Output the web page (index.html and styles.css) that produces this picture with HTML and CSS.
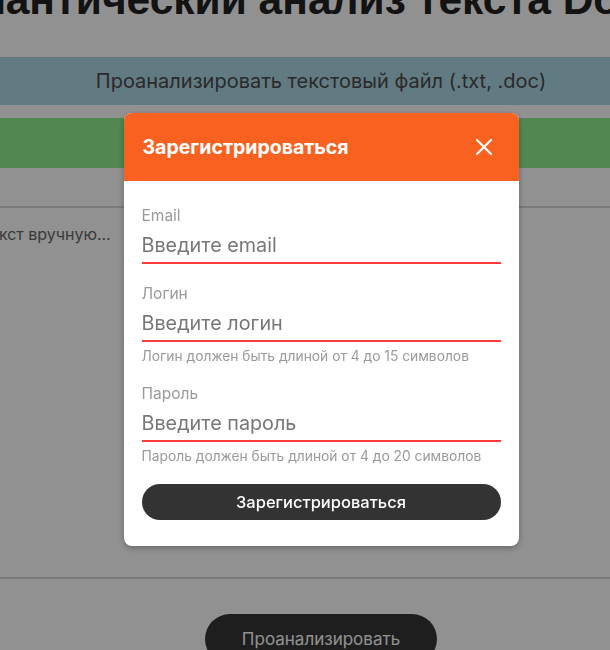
FILE: index.html
```
<!DOCTYPE html>
<html lang="ru">
  <head>
    <meta charset="UTF-8" />
    <meta name="viewport" content="width=device-width, initial-scale=1.0" />
    <title>Семантический анализ текста</title>
    <link rel="stylesheet" href="styles.css">
  </head>
  <body>
    <div class="page">
      <h1 class="page-title">Семантический анализ текста Docx</h1>
      <button class="file-button">Проанализировать текстовый файл (.txt, .doc)</button>
      <button class="manual-button">Ввести текст вручную</button>
      <textarea class="text-input" placeholder="Введите текст вручную..."></textarea>
      <div class="actions">
        <button class="analyze-button">Проанализировать</button>
      </div>
    </div>

    <!-- Register modal -->
    <div class="overlay">
      <div class="modal">
        <div class="modal-header">
          <h2 class="modal-title">Зарегистрироваться</h2>
          <button class="close-button" aria-label="Закрыть">
            <svg width="18" height="18" viewBox="0 0 18 18">
              <path d="M2 2 L16 16 M16 2 L2 16" stroke="#fff" stroke-width="2.2" stroke-linecap="round" />
            </svg>
          </button>
        </div>
        <form class="modal-body">
          <div class="field">
            <label class="field-label">Email</label>
            <input class="field-input" type="text" placeholder="Введите email" />
          </div>
          <div class="field">
            <label class="field-label">Логин</label>
            <input class="field-input" type="text" placeholder="Введите логин" />
            <div class="field-hint">Логин должен быть длиной от 4 до 15 символов</div>
          </div>
          <div class="field">
            <label class="field-label">Пароль</label>
            <input class="field-input" type="text" placeholder="Введите пароль" />
            <div class="field-hint">Пароль должен быть длиной от 4 до 20 символов</div>
          </div>
          <button type="button" class="submit-button">Зарегистрироваться</button>
        </form>
      </div>
    </div>
  </body>
</html>
```
FILE: styles.css
```
* {
  margin: 0;
  padding: 0;
  box-sizing: border-box;
}

html,
body {
  height: 100%;
  width: 100%;
  overflow: hidden;
}

body {
  background-color: #fff;
  font-family: 'Inter', 'Liberation Sans', sans-serif;
}

/* Background page */
.page {
  width: 800px;
  margin-left: -79px;
  display: flex;
  flex-direction: column;
}

.page-title {
  font-family: 'Liberation Sans', Arial, sans-serif;
  font-size: 42.5px;
  line-height: 48px;
  font-weight: bold;
  color: #222;
  text-align: center;
  white-space: nowrap;
  padding-right: 64px;
  margin-top: -24px;
  margin-bottom: 33px;
}

.file-button,
.manual-button {
  border: none;
  width: 100%;
  font-family: 'Inter', sans-serif;
  font-size: 20px;
  color: #4a4a4a;
  cursor: pointer;
}

.file-button {
  height: 48px;
  background-color: lightblue;
}

.manual-button {
  height: 50px;
  margin-top: 13px;
  background-color: lightgreen;
}

.text-input {
  margin-top: 38px;
  height: 373px;
  width: 100%;
  padding: 16px 0 16px 0;
  text-indent: -10px;
  border: 2px solid #d6d6d6;
  font-family: 'Inter', sans-serif;
  font-size: 16px;
  resize: none;
}

.text-input::placeholder {
  color: #666;
}

.actions {
  display: flex;
  justify-content: center;
  margin-top: 35px;
}

.analyze-button {
  width: 232px;
  height: 50px;
  border: none;
  border-radius: 25px;
  background-color: #363636;
  color: #fff;
  font-family: 'Inter', sans-serif;
  font-size: 17px;
  cursor: pointer;
}

/* Modal */
.overlay {
  position: fixed;
  top: 0;
  left: 0;
  right: 0;
  bottom: 0;
  background-color: rgba(0, 0, 0, 0.43);
  display: flex;
  align-items: center;
  justify-content: center;
  padding-left: 32px;
  padding-top: 9px;
}

.modal {
  width: 395px;
  background-color: #fff;
  border-radius: 8px;
  overflow: hidden;
  box-shadow: 0 2px 6px rgba(0, 0, 0, 0.3);
}

.modal-header {
  height: 68px;
  background-color: #f86120;
  display: flex;
  align-items: center;
  justify-content: space-between;
  padding: 0 26px 0 19px;
}

.modal-title {
  color: #fff;
  font-size: 19.5px;
  font-weight: 700;
}

.close-button {
  background: none;
  border: none;
  cursor: pointer;
  display: flex;
}

.modal-body {
  padding: 26px 18px;
  display: flex;
  flex-direction: column;
}

.field {
  display: flex;
  flex-direction: column;
  margin-bottom: 21px;
}

.field-label {
  font-size: 15.5px;
  line-height: 18px;
  color: #9a9a9a;
}

.field-input {
  border: none;
  border-bottom: 2px solid #ff3b3b;
  padding: 9px 0 6px;
  font-family: 'Inter', sans-serif;
  font-size: 19.8px;
  line-height: 22px;
  color: #333;
  background: #fff;
  outline: none;
}

.field-input::placeholder {
  color: #777;
}

.field-hint {
  margin-top: 6px;
  font-size: 13.8px;
  line-height: 16px;
  color: #9a9a9a;
}

.field:last-of-type {
  margin-bottom: 20px;
}

.submit-button {
  height: 36px;
  border: none;
  border-radius: 18px;
  background-color: #333;
  color: #fff;
  font-family: 'Inter', sans-serif;
  font-size: 16.5px;
  font-weight: 500;
  cursor: pointer;
}
```
